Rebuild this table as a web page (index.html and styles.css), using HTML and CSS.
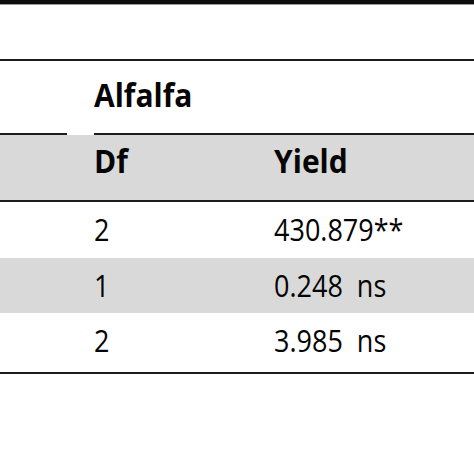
FILE: index.html
```html
<!DOCTYPE html>
<html lang="en">
<head>
<meta charset="utf-8">
<title>Alfalfa yield table</title>
<link rel="stylesheet" href="styles.css">
</head>
<body>
<div class="sheet">
  <div class="top-bar"></div>
  <div class="caption-space"></div>
  <div class="rule"></div>
  <div class="row group-row">
    <span class="cell"></span>
    <span class="cell bold"><span class="tall">Alfalfa</span></span>
    <span class="cell"></span>
  </div>
  <div class="split-rule">
    <span class="seg seg-left"></span>
    <span class="notch"></span>
    <span class="seg seg-right"></span>
  </div>
  <div class="row head-row shaded">
    <span class="cell"></span>
    <span class="cell bold"><span class="tall">Df</span></span>
    <span class="cell bold"><span class="tall">Yield</span></span>
  </div>
  <div class="rule"></div>
  <div class="row data-row r1">
    <span class="cell"></span>
    <span class="cell"><span class="num">2</span></span>
    <span class="cell"><span class="num">430.879**</span></span>
  </div>
  <div class="row data-row r2 shaded">
    <span class="cell"></span>
    <span class="cell"><span class="num">1</span></span>
    <span class="cell"><span class="num">0.248&nbsp; ns</span></span>
  </div>
  <div class="row data-row r3">
    <span class="cell"></span>
    <span class="cell"><span class="num">2</span></span>
    <span class="cell"><span class="num">3.985&nbsp; ns</span></span>
  </div>
  <div class="rule"></div>
</div>
</body>
</html>
```

FILE: styles.css
```css
html, body {
  margin: 0;
  padding: 0;
  background: #ffffff;
}

.sheet {
  width: 474px;
  height: 474px;
  overflow: hidden;
  font-family: "Open Sans", "Noto Sans", sans-serif;
  color: #050505;
}

.top-bar {
  height: 4px;
  background: #0d0d0d;
  border-bottom: 1px solid #9a9a9a;
}

.caption-space {
  height: 54px;
}

.rule {
  height: 2px;
  background: #1c1c1c;
}

.row {
  display: grid;
  grid-template-columns: 94px 180px 1fr;
  box-sizing: border-box;
}

.cell {
  white-space: pre;
}

.bold {
  font-weight: 700;
  font-size: 30px;
  line-height: 41px;
}

.tall {
  display: inline-block;
  transform: scaleY(1.05);
  transform-origin: 0 32px;
}

.shaded {
  background: #d9d9d9;
}

.group-row {
  height: 72px;
  padding-top: 14px;
}

.split-rule {
  display: flex;
  height: 2px;
}

.seg {
  background: #1c1c1c;
}

.seg-left {
  width: 67px;
}

.notch {
  width: 27px;
  background: #ffffff;
}

.seg-right {
  flex: 1;
}

.head-row {
  height: 65px;
  padding-top: 6px;
}

.data-row {
  font-size: 27px;
  line-height: 37px;
  padding-top: 10px;
}

.num {
  display: inline-block;
  transform: scaleY(1.17);
  transform-origin: 0 29px;
}

.r1 {
  height: 56px;
}

.r2 {
  height: 55px;
}

.r3 {
  height: 59px;
}
```
